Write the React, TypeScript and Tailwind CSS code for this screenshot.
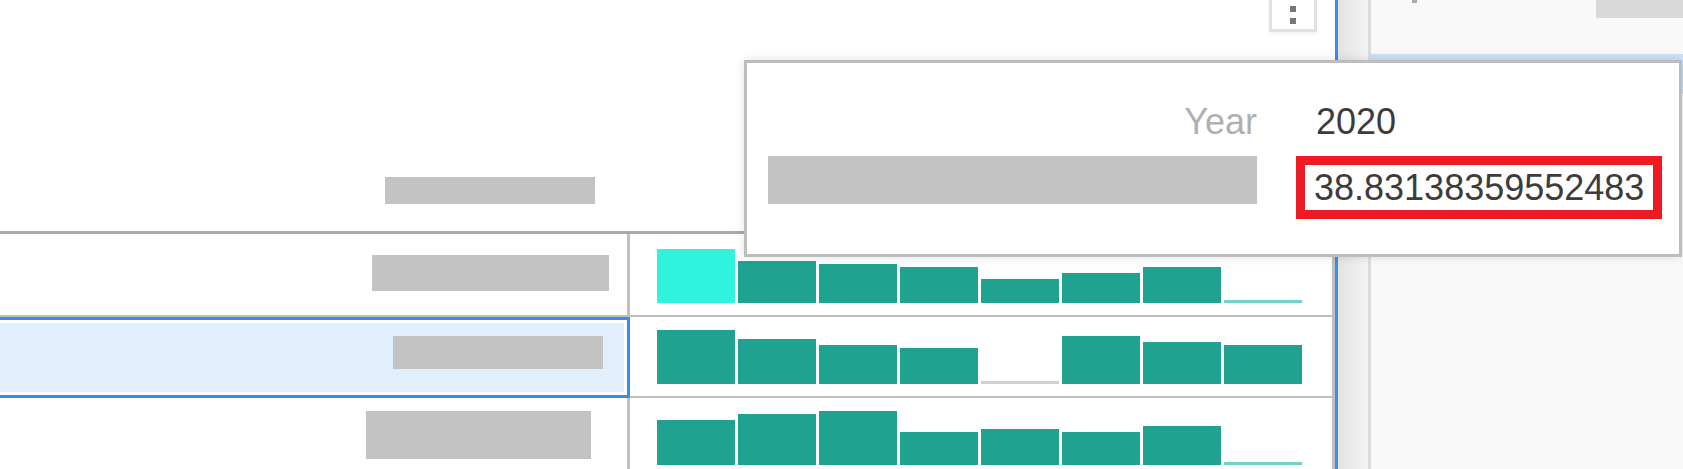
import React from "react";

type BarKind = "hi" | "n" | "light" | "empty";

interface RowData {
  selected?: boolean;
  label: { w: number; h: number; pt: number; pr: number };
  bars: number[];
  kinds: BarKind[];
}

const rows: RowData[] = [
  {
    label: { w: 237, h: 36, pt: 21, pr: 18 },
    bars: [54, 42, 39, 36, 24, 30, 36, 3],
    kinds: ["hi", "n", "n", "n", "n", "n", "n", "light"],
  },
  {
    selected: true,
    label: { w: 210, h: 33, pt: 13, pr: 21 },
    bars: [54, 45, 39, 36, 3, 48, 42, 39],
    kinds: ["n", "n", "n", "n", "empty", "n", "n", "n"],
  },
  {
    label: { w: 225, h: 48, pt: 13, pr: 36 },
    bars: [45, 51, 54, 33, 36, 33, 39, 3],
    kinds: ["n", "n", "n", "n", "n", "n", "n", "light"],
  },
];

const barColor: Record<BarKind, string> = {
  hi: "bg-[#2ff3dc]",
  n: "bg-[#1fa290]",
  light: "bg-[#6dd4c6]",
  empty: "bg-[#d0d0d0]",
};

function Redacted({ w, h }: { w: number; h: number }) {
  return <div className="bg-[#c3c3c3] shrink-0" style={{ width: w, height: h }} />;
}

function TableRow({ row, height }: { row: RowData; height: number }) {
  const { label } = row;
  return (
    <div className="flex" style={{ height }}>
      {row.selected ? (
        <div className="w-[630px] shrink-0 border-y-[3px] border-r-[3px] border-[#3a8ee6] bg-white pt-[3px] pb-[3px] pr-[3px]">
          <div
            className="h-full bg-[#e1effd] flex justify-end items-start"
            style={{ paddingTop: label.pt, paddingRight: label.pr }}
          >
            <Redacted w={label.w} h={label.h} />
          </div>
        </div>
      ) : (
        <div
          className="w-[630px] shrink-0 border-r-[3px] border-b-2 border-[#bfbfbf] flex justify-end items-start"
          style={{ paddingTop: label.pt, paddingRight: label.pr }}
        >
          <Redacted w={label.w} h={label.h} />
        </div>
      )}
      <div className="flex-1 border-b-2 border-[#bfbfbf] flex items-end gap-[3px] pl-[27px] pb-[12px]">
        {row.bars.map((h, i) => (
          <div key={i} className={`w-[78px] ${barColor[row.kinds[i]]}`} style={{ height: h }} />
        ))}
      </div>
    </div>
  );
}

export default function App() {
  return (
    <div className="relative w-[1683px] h-[469px] overflow-hidden bg-white flex font-['Liberation_Sans',Arial,sans-serif]">
      {/* visual container */}
      <div className="relative w-[1338px] shrink-0 h-full border-r-[3px] border-[#3a8ee6] flex flex-col">
        <div className="h-[234px] shrink-0 border-b-[3px] border-[#a9a9a9] flex">
          <div className="w-[630px] flex justify-end items-end pr-[35px] pb-[27px]">
            <Redacted w={210} h={27} />
          </div>
        </div>
        <div className="flex-1 border-r-[3px] border-[#bfbfbf] overflow-hidden">
          <TableRow row={rows[0]} height={83} />
          <TableRow row={rows[1]} height={81} />
          <TableRow row={rows[2]} height={81} />
        </div>

        {/* more options */}
        <button className="absolute left-[1269px] top-[-20px] w-[48px] h-[52px] bg-white border-[3px] border-[#e0e0e0] shadow-[0_2px_3px_rgba(0,0,0,0.06)] flex flex-col items-center justify-end gap-[6px] pb-[5px]">
          <span className="w-[6px] h-[6px] bg-[#777]" />
          <span className="w-[6px] h-[6px] bg-[#777]" />
          <span className="w-[6px] h-[6px] bg-[#777]" />
        </button>
      </div>

      {/* splitter */}
      <div className="w-[33px] shrink-0 h-full bg-gradient-to-r from-[#e3e3e3] to-[#f4f4f4] border-r-[3px] border-[#dcdcdc]" />

      {/* right pane */}
      <div className="flex-1 h-full bg-[#f9f9f9] flex flex-col">
        <div className="h-[54px] flex items-start">
          <div className="ml-[41px] w-[5px] h-[3px] bg-[#aaa]" />
          <div className="ml-auto w-[87px] h-[18px] bg-[#d9d9d9]" />
        </div>
        <div className="h-[40px] bg-[#cde2f8]" />
      </div>

      {/* tooltip */}
      <div className="absolute left-[744px] top-[60px] w-[938px] h-[197px] bg-white border-[3px] border-[#bdbdbd] shadow-[0_0_10px_rgba(0,0,0,0.12)]">
        <div className="grid grid-cols-[489px_auto] gap-x-[59px] gap-y-[16px] pl-[21px] pt-[41px] text-[36px] leading-none">
          <div className="text-right text-[#b0b0b0] h-[36px]">Year</div>
          <div className="text-[#3c3c3c] h-[36px]">2020</div>
          <Redacted w={489} h={48} />
          <div>
            <span className="inline-block ml-[-20px] border-[9px] border-[#ed1c24] pl-[9px] pr-[9px] pt-[5px] pb-[4px] text-[#3c3c3c] leading-none">
              38.83138359552483
            </span>
          </div>
        </div>
      </div>
    </div>
  );
}
